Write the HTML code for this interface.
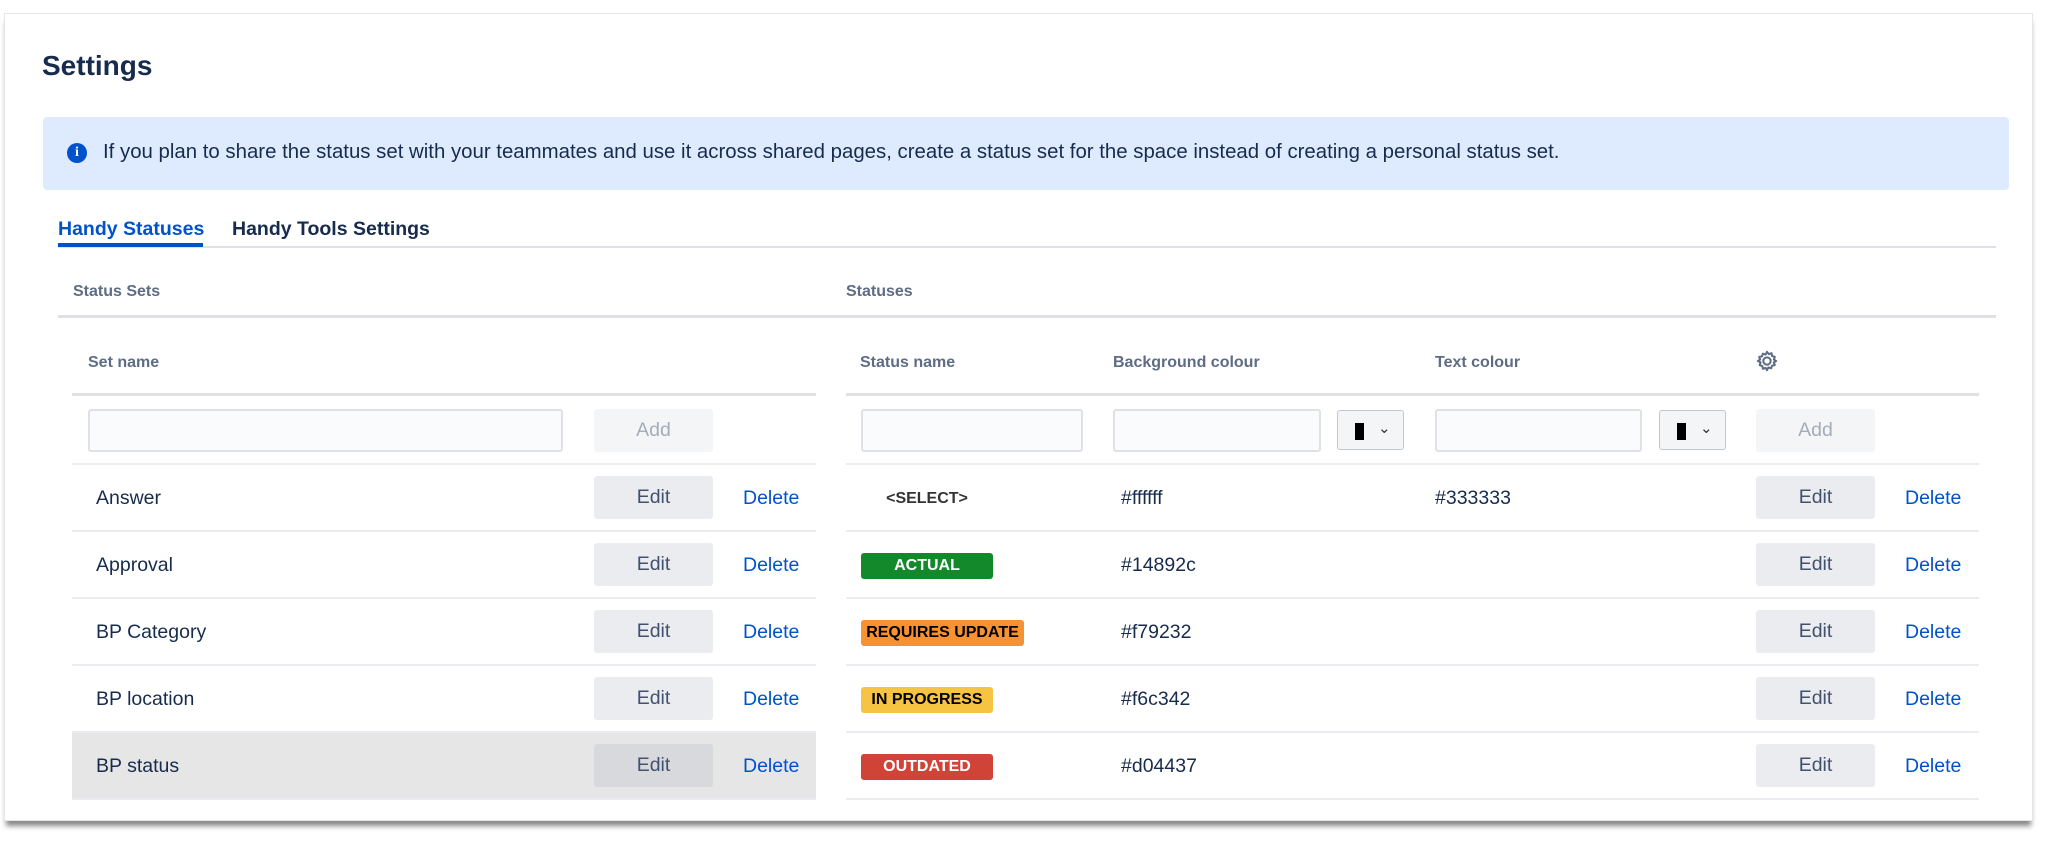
<!DOCTYPE html>
<html><head><style>
*{box-sizing:border-box;margin:0;padding:0}
body{width:2048px;height:842px;background:#fff;font-family:"Liberation Sans",sans-serif;position:relative;overflow:hidden;color:#172b4d}
.card{position:absolute;left:4px;top:13px;width:2029px;height:808px;background:#fff;border:1px solid #e6e6e6;box-shadow:0 7px 5px -2px #888}
.a{position:absolute}
h1{position:absolute;left:42px;top:50px;font-size:28px;font-weight:bold;color:#172b4d}
.info{left:43px;top:117px;width:1966px;height:73px;background:#deebff;border-radius:4px}
.info span{position:absolute;left:60px;top:24px;font-size:20.4px;color:#172b4d}
.ic{position:absolute;left:24px;top:26px;width:20px;height:20px;border-radius:50%;background:#0052cc;color:#fff;font-size:14px;font-weight:bold;text-align:center;line-height:20px;font-family:"Liberation Serif",serif}
.tab{top:218px;font-size:19.5px;font-weight:bold}
.sec{top:283px;font-size:16px;font-weight:bold;color:#5e6c84}
.hd{top:354px;font-size:16px;font-weight:bold;color:#5e6c84}
.line{height:2px;background:#dfe1e6}
.row{height:2px;background:#ebecf0}
.inp{height:43px;border:2px solid #dfe1e6;background:#fafbfc;border-radius:3px}
.btn{width:119px;height:43px;background:#ebecf0;border-radius:3px;text-align:center;line-height:43px;font-size:19.5px;color:#42526e}
.add{background:#f4f5f7;color:#a5adba}
.txt{font-size:19.5px;color:#172b4d}
.del{font-size:19.5px;color:#0052cc}
.sel{width:67px;height:40px;border:1px solid #c1c7d0;border-radius:3px;background:#f4f5f7}
.sel i{position:absolute;left:17px;top:12px;width:9px;height:17px;background:#000}
.sel b{position:absolute;left:40px;top:8px;font-size:15px;font-weight:normal;color:#333}
.badge{height:26px;border-radius:3px;font-size:16px;font-weight:bold;text-align:center;line-height:26px}
</style></head><body>
<div class="card"></div>
<h1>Settings</h1>
<div class="a info"><div class="ic">i</div><span>If you plan to share the status set with your teammates and use it across shared pages, create a status set for the space instead of creating a personal status set.</span></div>
<div class="a tab" style="left:58px;color:#0052cc">Handy Statuses</div>
<div class="a tab" style="left:232px;color:#172b4d">Handy Tools Settings</div>
<div class="a line" style="left:58px;top:246px;width:1938px"></div>
<div class="a" style="left:58px;top:243px;width:145px;height:4px;background:#0052cc"></div>
<div class="a sec" style="left:73px">Status Sets</div>
<div class="a sec" style="left:846px">Statuses</div>
<div class="a line" style="left:58px;top:315px;width:1938px;height:3px"></div>

<div class="a" style="left:72px;top:732px;width:744px;height:67px;background:#e6e6e6"></div>
<div class="a hd" style="left:88px">Set name</div>
<div class="a hd" style="left:860px">Status name</div>
<div class="a hd" style="left:1113px">Background colour</div>
<div class="a hd" style="left:1435px">Text colour</div>
<svg class="a" style="left:1756px;top:350px" width="22" height="22" viewBox="0 0 24 24"><path d="M12 2l2 2.5 3-1 .5 3 3 1-1 3L22 12l-2.5 1.5 1 3-3 .5-1 3-3-1L12 22l-1.5-2.5-3 1-.5-3-3-1 1-3L2 12l2.5-1.5-1-3 3-.5 1-3 3 1z" fill="none" stroke="#5e6c84" stroke-width="2.2" stroke-linejoin="round"/><circle cx="12" cy="12" r="4" fill="none" stroke="#5e6c84" stroke-width="2.2"/></svg>
<div class="a line" style="left:72px;top:393px;width:744px;height:3px"></div>
<div class="a line" style="left:846px;top:393px;width:1133px;height:3px"></div>

<div class="a inp" style="left:88px;top:409px;width:475px"></div>
<div class="a btn add" style="left:594px;top:409px">Add</div>
<div class="a inp" style="left:861px;top:409px;width:222px"></div>
<div class="a inp" style="left:1113px;top:409px;width:208px"></div>
<div class="a sel" style="left:1337px;top:410px"><i></i><b>&#8964;</b></div>
<div class="a inp" style="left:1435px;top:409px;width:207px"></div>
<div class="a sel" style="left:1659px;top:410px"><i></i><b>&#8964;</b></div>
<div class="a btn add" style="left:1756px;top:409px">Add</div>

<div class="a row" style="left:72px;top:463px;width:744px"></div><div class="a row" style="left:846px;top:463px;width:1133px"></div>
<div class="a row" style="left:72px;top:530px;width:744px"></div><div class="a row" style="left:846px;top:530px;width:1133px"></div>
<div class="a row" style="left:72px;top:597px;width:744px"></div><div class="a row" style="left:846px;top:597px;width:1133px"></div>
<div class="a row" style="left:72px;top:664px;width:744px"></div><div class="a row" style="left:846px;top:664px;width:1133px"></div>
<div class="a row" style="left:72px;top:731px;width:744px"></div><div class="a row" style="left:846px;top:731px;width:1133px"></div>
<div class="a row" style="left:72px;top:798px;width:744px"></div><div class="a row" style="left:846px;top:798px;width:1133px"></div>

<div class="a txt" style="left:96px;top:487px">Answer</div>
<div class="a txt" style="left:96px;top:554px">Approval</div>
<div class="a txt" style="left:96px;top:621px">BP Category</div>
<div class="a txt" style="left:96px;top:688px">BP location</div>
<div class="a txt" style="left:96px;top:755px">BP status</div>
<div class="a btn" style="left:594px;top:476px">Edit</div>
<div class="a btn" style="left:594px;top:543px">Edit</div>
<div class="a btn" style="left:594px;top:610px">Edit</div>
<div class="a btn" style="left:594px;top:677px">Edit</div>
<div class="a btn" style="left:594px;top:744px;background:#d8d9dc">Edit</div>
<div class="a del" style="left:743px;top:487px">Delete</div>
<div class="a del" style="left:743px;top:554px">Delete</div>
<div class="a del" style="left:743px;top:621px">Delete</div>
<div class="a del" style="left:743px;top:688px">Delete</div>
<div class="a del" style="left:743px;top:755px">Delete</div>

<div class="a badge" style="left:861px;top:486px;width:132px;color:#333">&lt;SELECT&gt;</div>
<div class="a badge" style="left:861px;top:553px;width:132px;background:#14892c;color:#fff">ACTUAL</div>
<div class="a badge" style="left:861px;top:620px;width:163px;background:#f79232;color:#000">REQUIRES UPDATE</div>
<div class="a badge" style="left:861px;top:687px;width:132px;background:#f6c342;color:#000">IN PROGRESS</div>
<div class="a badge" style="left:861px;top:754px;width:132px;background:#d04437;color:#fff">OUTDATED</div>
<div class="a txt" style="left:1121px;top:487px">#ffffff</div>
<div class="a txt" style="left:1435px;top:487px">#333333</div>
<div class="a txt" style="left:1121px;top:554px">#14892c</div>
<div class="a txt" style="left:1121px;top:621px">#f79232</div>
<div class="a txt" style="left:1121px;top:688px">#f6c342</div>
<div class="a txt" style="left:1121px;top:755px">#d04437</div>
<div class="a btn" style="left:1756px;top:476px">Edit</div>
<div class="a btn" style="left:1756px;top:543px">Edit</div>
<div class="a btn" style="left:1756px;top:610px">Edit</div>
<div class="a btn" style="left:1756px;top:677px">Edit</div>
<div class="a btn" style="left:1756px;top:744px">Edit</div>
<div class="a del" style="left:1905px;top:487px">Delete</div>
<div class="a del" style="left:1905px;top:554px">Delete</div>
<div class="a del" style="left:1905px;top:621px">Delete</div>
<div class="a del" style="left:1905px;top:688px">Delete</div>
<div class="a del" style="left:1905px;top:755px">Delete</div>
</body></html>
